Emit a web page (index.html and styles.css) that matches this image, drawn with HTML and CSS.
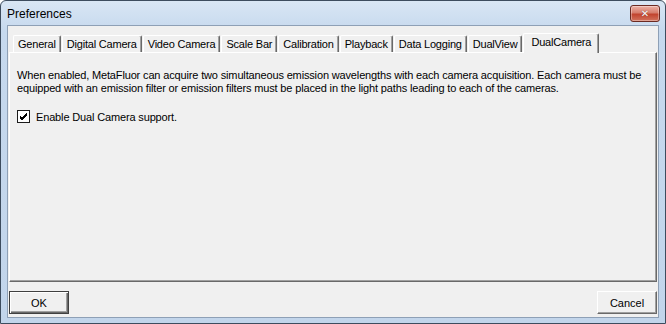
FILE: index.html
```html
<!DOCTYPE html>
<html lang="en">
<head>
    <meta charset="UTF-8">
    <title>Preferences</title>
    <link rel="stylesheet" href="styles.css">
</head>
<body>
<div class="window">
    <div class="titlebar">
        <span class="title">Preferences</span>
        <button class="close">&#x2715;</button>
    </div>
    <div class="client">
        <div class="tabs">
            <div class="tab">General</div>
            <div class="tab">Digital Camera</div>
            <div class="tab">Video Camera</div>
            <div class="tab">Scale Bar</div>
            <div class="tab">Calibration</div>
            <div class="tab">Playback</div>
            <div class="tab">Data Logging</div>
            <div class="tab">DualView</div>
            <div class="tab selected">DualCamera</div>
        </div>
        <div class="panel">
            <p class="info">When enabled, MetaFluor can acquire two simultaneous emission wavelengths with each camera acquisition. Each camera must be equipped with an emission filter or emission filters must be placed in the light paths leading to each of the cameras.</p>
            <label class="check">
                <span class="box">
                    <svg width="9" height="9" viewBox="0 0 9 9"><path d="M1 4 L3 6 L8 1 M1 5 L3 7 L8 2 M1 6 L3 8 L8 3" stroke="#000" stroke-width="1" fill="none"/></svg>
                </span>
                Enable Dual Camera support.
            </label>
        </div>
        <div class="footer">
            <button class="btn default">OK</button>
            <button class="btn">Cancel</button>
        </div>
    </div>
</div>
</body>
</html>
```

FILE: styles.css
```css
body {
    margin: 0;
    font-family: "Liberation Sans", Arial, sans-serif;
    font-size: 11px;
    letter-spacing: -0.15px;
    color: #000;
}

.window {
    width: 666px;
    height: 324px;
    box-sizing: border-box;
    border: 1px solid #3d4c5e;
    border-radius: 6px 6px 0 0;
    background: linear-gradient(#d9e6f4, #c6d9ee 30px, #c2d5eb);
    padding: 0 6px 5px 6px;
    display: flex;
    flex-direction: column;
}

.titlebar {
    height: 24px;
    display: flex;
    align-items: center;
    justify-content: space-between;
}

.title {
    font-size: 12px;
    letter-spacing: 0;
    margin-top: 2px;
}

.close {
    width: 30px;
    height: 17px;
    margin-right: -1px;
    margin-top: 1px;
    border: 1px solid #6b2a22;
    border-radius: 3px;
    background: linear-gradient(#eeb2a6, #d67d6c 45%, #c2442f 55%, #d2735d);
    color: #fff;
    font-family: "DejaVu Sans", sans-serif;
    font-size: 10px;
    font-weight: bold;
    line-height: 15px;
    padding: 0;
    text-shadow: 0 0 1px #6b2a22;
    box-shadow: inset 0 0 0 1px rgba(255, 255, 255, 0.35);
}

.client {
    flex: 1;
    background: #f0f0f0;
    border: 1px solid #8ea0b6;
    display: flex;
    flex-direction: column;
}

.tabs {
    display: flex;
    align-items: flex-end;
    margin-top: 7px;
    padding-left: 5px;
    height: 19px;
}

.tab {
    height: 16px;
    line-height: 16px;
    padding: 0 4px;
    letter-spacing: -0.2px;
    border: 1px solid #fff;
    border-bottom: none;
    border-right-color: #696969;
    box-shadow: inset -1px 0 #a0a0a0;
    border-radius: 2px 2px 0 0;
    margin-right: 1px;
}

.tab.selected {
    height: 19px;
    line-height: 17px;
    margin-left: 0;
    margin-bottom: -1px;
    padding: 0 7px;
    background: #f0f0f0;
    position: relative;
}

.panel {
    height: 230px;
    box-sizing: border-box;
    margin: 0 1px;
    border: 1px solid;
    border-color: #fff #696969 #696969 #fff;
    box-shadow: inset -1px -1px #a0a0a0;
    padding: 16px 7px 0 7px;
}

.info {
    margin: 0;
    line-height: 13px;
}

.check {
    display: flex;
    align-items: center;
    gap: 6px;
    margin-top: 15px;
}

.box {
    width: 11px;
    height: 11px;
    border: 1px solid #1c1c1c;
    background: #fff;
    display: flex;
    align-items: center;
    justify-content: center;
}

.footer {
    display: flex;
    justify-content: space-between;
    padding: 9px 1px 0 1px;
}

.btn {
    width: 60px;
    height: 23px;
    font-family: "Liberation Sans", Arial, sans-serif;
    font-size: 11px;
    color: #000;
    background: #f0f0f0;
    border: 1px solid;
    border-color: #fff #696969 #696969 #fff;
    box-shadow: inset -1px -1px #a0a0a0;
    padding: 0;
}

.btn.default {
    border: 1px solid #404040;
    box-shadow: inset 1px 1px #fff, inset -1px -1px #696969, inset -2px -2px #a0a0a0;
}
```
